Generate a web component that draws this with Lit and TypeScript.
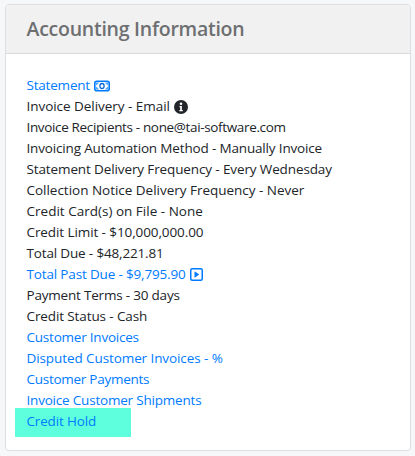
import { LitElement, html, css } from "lit";
import { customElement } from "lit/decorators.js";

type Row = { t: string; link?: boolean; ls: number; icon?: "bill" | "info" | "play" };

const rows: Row[] = [
  { t: "Statement", link: true, ls: -0.2, icon: "bill" },
  { t: "Invoice Delivery - Email", ls: -0.04, icon: "info" },
  { t: "Invoice Recipients - none@tai-software.com", ls: -0.35 },
  { t: "Invoicing Automation Method - Manually Invoice", ls: -0.16 },
  { t: "Statement Delivery Frequency - Every Wednesday", ls: -0.12 },
  { t: "Collection Notice Delivery Frequency - Never", ls: -0.02 },
  { t: "Credit Card(s) on File - None", ls: 0.01 },
  { t: "Credit Limit - $10,000,000.00", ls: -0.09 },
  { t: "Total Due - $48,221.81", ls: -0.16 },
  { t: "Total Past Due - $9,795.90", link: true, ls: -0.16, icon: "play" },
  { t: "Payment Terms - 30 days", ls: -0.2 },
  { t: "Credit Status - Cash", ls: -0.11 },
  { t: "Customer Invoices", link: true, ls: -0.22 },
  { t: "Disputed Customer Invoices - %", link: true, ls: -0.09 },
  { t: "Customer Payments", link: true, ls: -0.27 },
  { t: "Invoice Customer Shipments", link: true, ls: -0.2 },
];

@customElement("app-root")
export class AppRoot extends LitElement {
  static styles = css`
    :host { display: block; min-height: 456px; background: #f6f7f9; box-sizing: border-box; padding: 4px 4px 4px 5px;
      font-family: "Open Sans", "Noto Sans", sans-serif; font-size: 13.5px; letter-spacing: -0.16px; color: #212529; }
    .card { background: #fff; border: 1px solid #dfdfdf; border-radius: 4px; overflow: hidden; height: 447px; box-sizing: border-box; }
    .head { height: 49px; box-sizing: border-box; background: #f1f1f1; border-bottom: 1px solid #d9d9d9; padding: 0 20.5px; display: flex; align-items: center; }
    h2 { margin: 0; font-size: 19.5px; letter-spacing: -0.25px; font-weight: 600; color: #6d6f71; line-height: 1; }
    .body { padding: 21px 0 0 20.5px; display: flex; flex-direction: column; }
    .row { height: 21px; line-height: 21px; white-space: nowrap; display: flex; align-items: center; gap: 4px; }
    a { color: #007bff; text-decoration: none; }
    .blue { color: #007bff; }
    svg { display: block; }
    .hl { align-self: flex-start; margin: -3px 0 0 -11.5px; padding: 3px 0 5px 11.5px; height: 29px; box-sizing: border-box; background: #5effdc; line-height: 21px; width: 116px; }
  `;

  icon(kind?: Row["icon"]) {
    if (kind === "bill")
      return html`<svg class="blue" width="16" height="12" viewBox="0 0 16 12"><rect x="0.8" y="1.3" width="14.4" height="9.4" rx="2" fill="#fff" stroke="currentColor" stroke-width="1.6"/><path d="M2 2.5h3.4L2 5.4zM14 2.5h-3.4L14 5.4zM2 9.5h3.4L2 6.6zM14 9.5h-3.4L14 6.6z" fill="currentColor" opacity=".7"/><ellipse cx="8" cy="6" rx="2.1" ry="2.5" fill="none" stroke="#0a6ad6" stroke-width="1.3"/></svg>`;
    if (kind === "info")
      return html`<svg width="14" height="14" viewBox="0 0 14 14"><circle cx="7" cy="7" r="7" fill="#212529"/><circle cx="7" cy="3.7" r="1.3" fill="#fff"/><path d="M5.5 6h2.4v4h.9v1.2H5.3V10h.9V7.2h-.7z" fill="#fff"/></svg>`;
    if (kind === "play")
      return html`<svg class="blue" width="13" height="13" viewBox="0 0 13 13"><rect x="0.75" y="0.75" width="11.5" height="11.5" rx="1.5" fill="none" stroke="currentColor" stroke-width="1.5"/><path d="M4.5 3.2 9.3 6.5 4.5 9.8z" fill="currentColor"/></svg>`;
    return null;
  }

  render() {
    return html`
      <div class="card">
        <div class="head"><h2>Accounting Information</h2></div>
        <div class="body">
          ${rows.map(
            (r) => html`<div class="row">
              ${r.link
                ? html`<a href="#" style="letter-spacing:${r.ls}px">${r.t}</a>`
                : html`<span style="letter-spacing:${r.ls}px">${r.t}</span>`}
              ${this.icon(r.icon)}
            </div>`
          )}
          <div class="hl"><a href="#">Credit Hold</a></div>
        </div>
      </div>
    `;
  }
}
